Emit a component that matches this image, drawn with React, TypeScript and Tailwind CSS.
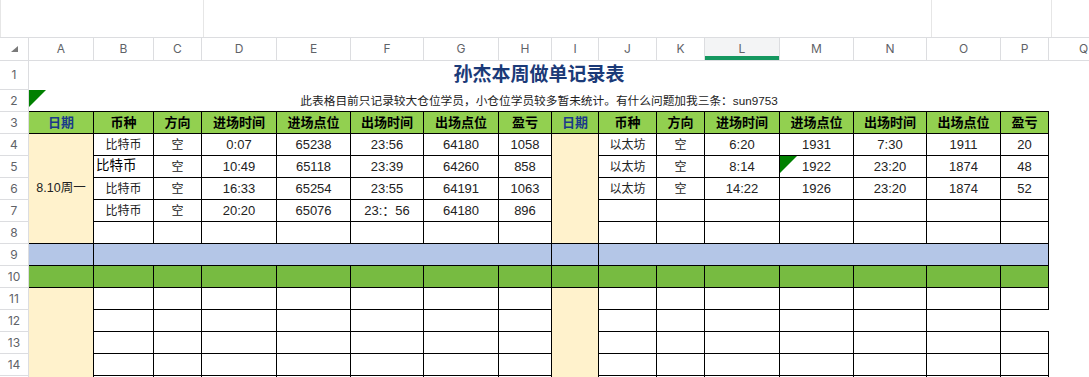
import type { ReactNode } from 'react';

const letters = ['A', 'B', 'C', 'D', 'E', 'F', 'G', 'H', 'I', 'J', 'K', 'L', 'M', 'N', 'O', 'P', 'Q'];

const heads = ['日期', '币种', '方向', '进场时间', '进场点位', '出场时间', '出场点位', '盈亏'];

const btc = [
  ['比特币', '空', '0:07', '65238', '23:56', '64180', '1058'],
  ['比特币', '空', '10:49', '65118', '23:39', '64260', '858'],
  ['比特币', '空', '16:33', '65254', '23:55', '64191', '1063'],
  ['比特币', '空', '20:20', '65076', '23:：56', '64180', '896'],
  ['', '', '', '', '', '', ''],
];

const eth = [
  ['以太坊', '空', '6:20', '1931', '7:30', '1911', '20'],
  ['以太坊', '空', '8:14', '1922', '23:20', '1874', '48'],
  ['以太坊', '空', '14:22', '1926', '23:20', '1874', '52'],
  ['', '', '', '', '', '', ''],
  ['', '', '', '', '', '', ''],
];

const cjk = /[\u4e00-\u9fff]/;

function RowNum({ n }: { n?: number }) {
  return (
    <div className="flex items-center justify-center border-r border-b border-[#dcdde0] text-[12px] text-[#5f6368] font-['Inter',sans-serif]">
      {n}
    </div>
  );
}

function Cell({
  children,
  className = '',
  noRight = false,
}: {
  children?: ReactNode;
  className?: string;
  noRight?: boolean;
}) {
  return (
    <div
      className={`flex items-center justify-center border-b border-black ${
        noRight ? '' : 'border-r'
      } ${className}`}
    >
      {children}
    </div>
  );
}

function Value({ v }: { v: string }) {
  return <span className={cjk.test(v) ? 'text-[12px]' : 'text-[13px]'}>{v}</span>;
}

function Triangle() {
  return (
    <svg className="absolute top-0 left-0" width="17" height="17" viewBox="0 0 17 17">
      <polygon points="0,0 17,0 0,17" fill="#008000" />
    </svg>
  );
}

export default function App() {
  return (
    <div className="w-[1089px] h-[377px] overflow-hidden bg-white text-[#222] font-['Liberation_Sans','Noto_Sans_CJK_SC',sans-serif]">
      {/* formula bar area */}
      <div className="flex h-[38px] border-b border-[#dcdde0]">
        <div className="w-[204px] border-l border-r border-[#e6e6e6]" />
        <div className="w-[728px] border-r border-[#e6e6e6]" />
        <div className="w-[120px] border-r border-[#e6e6e6]" />
        <div className="flex-1" />
      </div>

      <div className="grid grid-cols-[29px_65px_60px_48px_75px_74px_73px_75px_53px_47px_58px_48px_75px_74px_73px_74px_48px_70px] grid-rows-[23px_29px_22px_22px_22px_22px_22px_22px_22px_22px_22px_22px_22px_22px_22px_22px]">
        {/* column letters */}
        <div className="flex items-center justify-center border-r border-b border-[#dcdde0]">
          <svg width="7" height="6" viewBox="0 0 7 6">
            <polygon points="7,0 7,6 0,6" fill="#7a7a7a" />
          </svg>
        </div>
        {letters.map((l) =>
          l === 'L' ? (
            <div
              key={l}
              className="relative flex items-center justify-center bg-[#f3f4f5] border-r border-b border-[#dcdde0] text-[12px] text-[#5f6368] font-['Inter',sans-serif]"
            >
              {l}
              <div className="absolute left-0 right-0 bottom-0 h-[4px] bg-[#14975f]" />
            </div>
          ) : (
            <div
              key={l}
              className="flex items-center justify-center border-r border-b border-[#dcdde0] text-[12px] text-[#5f6368] font-['Inter',sans-serif]"
            >
              {l}
            </div>
          )
        )}

        {/* row 1 */}
        <RowNum n={1} />
        <div className="col-span-16 flex items-center justify-center text-[19px] font-bold text-[#1b3a78]">
          孙杰本周做单记录表
        </div>
        <div />

        {/* row 2 */}
        <RowNum n={2} />
        <div className="relative col-span-16 flex items-center justify-center border-b border-black text-[11.7px] text-[#222]">
          <Triangle />
          此表格目前只记录较大仓位学员，小仓位学员较多暂未统计。有什么问题加我三条：sun9753
        </div>
        <div />

        {/* row 3 header */}
        <RowNum n={3} />
        {[...heads, ...heads].map((h, i) => (
          <Cell
            key={i}
            className={`bg-[#92d050] text-[13px] font-bold ${h === '日期' ? 'text-[#1b3a8a]' : 'text-black'}`}
          >
            {h}
          </Cell>
        ))}
        <div />

        {/* rows 4-8 */}
        {btc.map((row, r) => (
          <RowGroup key={r} n={4 + r} first={r === 0}>
            {row.map((v, c) =>
              r === 1 && c === 0 ? (
                <Cell key={c} className="justify-start pl-[2px]">
                  <span className="text-[13.5px] text-black">{v}</span>
                </Cell>
              ) : (
                <Cell key={c}>
                  <Value v={v} />
                </Cell>
              )
            )}
            {r === 0 && <Cell className="row-span-5 bg-[#fff2cc]" />}
            {eth[r].map((v, c) =>
              r === 1 && c === 3 ? (
                <Cell key={'e' + c} className="relative">
                  <Triangle />
                  <Value v={v} />
                </Cell>
              ) : (
                <Cell key={'e' + c}>
                  <Value v={v} />
                </Cell>
              )
            )}
          </RowGroup>
        ))}

        {/* row 9 */}
        <RowNum n={9} />
        <Cell className="bg-[#b4c6e7]" />
        <Cell className="col-span-7 bg-[#b4c6e7]" />
        <Cell className="bg-[#b4c6e7]" />
        <Cell className="col-span-7 bg-[#b4c6e7]" />
        <div />

        {/* row 10 */}
        <RowNum n={10} />
        {Array.from({ length: 16 }).map((_, i) => (
          <Cell key={i} className="bg-[#77bb41]" />
        ))}
        <div />

        {/* rows 11-15, 15 only peeks in at the bottom edge */}
        {[11, 12, 13, 14, 15].map((n, r) => (
          <EmptyRow key={n} n={n} first={r === 0} />
        ))}
      </div>
    </div>
  );
}

function RowGroup({ n, first, children }: { n: number; first: boolean; children: ReactNode }) {
  return (
    <>
      <RowNum n={n} />
      {first && (
        <Cell className="row-span-5 bg-[#fff2cc]">
          <span className="text-[12.5px]">8.10周一</span>
        </Cell>
      )}
      {children}
      <div />
    </>
  );
}

function EmptyRow({ n, first }: { n: number; first: boolean }) {
  return (
    <>
      <RowNum n={n < 15 ? n : undefined} />
      {first && <Cell className="row-span-5 bg-[#fff2cc]" />}
      {Array.from({ length: 7 }).map((_, i) => (
        <Cell key={i} />
      ))}
      {first && <Cell className="row-span-5 bg-[#fff2cc]" />}
      {Array.from({ length: 7 }).map((_, i) => (
        <Cell key={'r' + i} noRight={n === 12 && i === 6} />
      ))}
      <div />
    </>
  );
}
